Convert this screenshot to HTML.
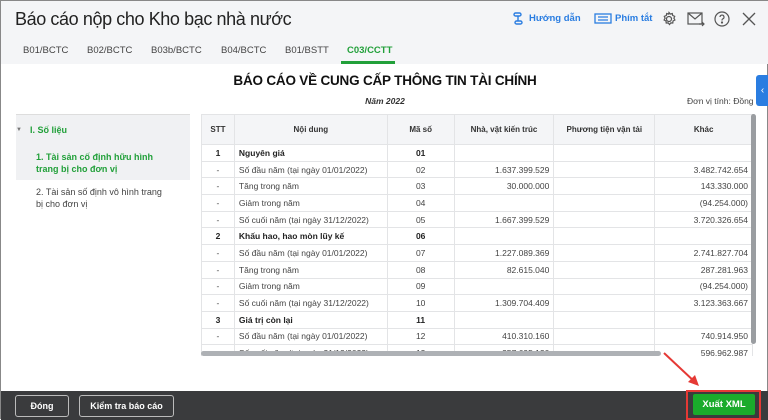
<!DOCTYPE html>
<html><head><meta charset="utf-8"><style>
*{box-sizing:border-box;margin:0;padding:0}
body{width:768px;height:419px;overflow:hidden;font-family:"Liberation Sans",sans-serif;background:#fff;position:relative;border:1px solid #888}
.hdr{position:absolute;left:0;top:0;width:768px;height:63px;background:#f4f5f7}
.title{position:absolute;left:14px;top:8px;font-size:18px;color:#222;letter-spacing:-0.4px}
.tabs{position:absolute;top:44px;font-size:9.5px;color:#444}
.tab{position:absolute;white-space:nowrap}
.act{color:#22a03a;font-weight:bold}
.uline{position:absolute;top:60px;height:3px;background:#22a03a}
.top-r{position:absolute;top:12px;font-size:9.5px;color:#2a7de1;font-weight:bold}
.h1{position:absolute;left:0;width:768px;top:72px;text-align:center;font-size:13.5px;font-weight:bold;color:#111;letter-spacing:-0.2px}
.year{position:absolute;top:95px;left:0;width:768px;text-align:center;font-size:8.5px;font-style:italic;font-weight:bold;color:#333}
.dv{position:absolute;top:95px;left:686px;font-size:8.5px;color:#444;white-space:nowrap}
.lp{position:absolute;left:15px;top:113px;width:174px;border-top:1px solid #ddd;font-size:9px}
table{position:absolute;left:0;top:0;border-collapse:collapse;font-size:8.5px;color:#444;table-layout:fixed}
td,th{border:1px solid #e3e4e6;height:16.7px;padding:0 4px;white-space:nowrap;overflow:hidden}
th{height:30px;background:#f4f5f7;font-weight:bold;color:#333;font-size:8px}
.c{text-align:center}.r{text-align:right}.b{font-weight:bold;color:#222}
.wrap{position:absolute;left:200px;top:113px;width:552px;height:242px;overflow:hidden}
.foot{position:absolute;left:0;top:390px;width:768px;height:29px;background:#3a3b3d}
.btn{position:absolute;top:4px;height:22px;border:1px solid #bbb;border-radius:3px;color:#fff;font-size:9px;font-weight:bold;text-align:center;line-height:20px}
</style></head><body>
<div class="hdr"></div>
<div class="title">Báo cáo nộp cho Kho bạc nhà nước</div>
<div class="tabs">
<span class="tab" style="left:22px">B01/BCTC</span>
<span class="tab" style="left:86px">B02/BCTC</span>
<span class="tab" style="left:150px">B03b/BCTC</span>
<span class="tab" style="left:220px">B04/BCTC</span>
<span class="tab" style="left:284px">B01/BSTT</span>
<span class="tab act" style="left:346px">C03/CCTT</span>
</div>
<div class="uline" style="left:340px;width:54px"></div>
<svg style="position:absolute;left:511px;top:11px" width="12" height="14" viewBox="0 0 12 14" fill="none" stroke="#2a7de1" stroke-width="1.4"><rect x="2" y="1" width="7" height="3" rx="1.5"/><rect x="3" y="9" width="7" height="3" rx="1.5"/><path d="M6 4v5"/></svg>
<div class="top-r" style="left:528px">Hướng dẫn</div>
<svg style="position:absolute;left:593px;top:12px" width="18" height="12" viewBox="0 0 18 12" fill="none" stroke="#2a7de1" stroke-width="1.3"><rect x="1" y="1" width="16" height="9"/><path d="M4 4h10M4 7h10"/></svg>
<div class="top-r" style="left:614px">Phím tắt</div>
<svg style="position:absolute;left:660px;top:10px" width="16" height="16" viewBox="0 0 16 16" fill="none" stroke="#555" stroke-width="1.2"><circle cx="8" cy="8" r="2.5"/><path d="M8 1.5l1.3 1.6 2-.6.4 2 2 .8-.8 1.9 1 1.8-1.9 1-.2 2-2-.1-1.3 1.6-1.3-1.6-2 .1-.2-2-1.9-1 1-1.8-.8-1.9 2-.8.4-2 2 .6z"/></svg>
<svg style="position:absolute;left:686px;top:10px" width="18" height="16" viewBox="0 0 18 16" fill="none" stroke="#555" stroke-width="1.2"><rect x="1" y="2" width="14" height="11"/><path d="M1 2l7 6 7-6M12 13h5M15 11l2 2-2 2"/></svg>
<svg style="position:absolute;left:713px;top:10px" width="16" height="16" viewBox="0 0 16 16" fill="none" stroke="#555" stroke-width="1.2"><circle cx="8" cy="8" r="7"/><path d="M6 6a2 2 0 1 1 2.5 2c-.5.2-.5.7-.5 1.5"/><circle cx="8" cy="11.5" r=".5" fill="#555"/></svg>
<svg style="position:absolute;left:741px;top:11px" width="14" height="14" viewBox="0 0 14 14" stroke="#555" stroke-width="1.3"><path d="M1 1l12 12M13 1L1 13"/></svg>

<div class="h1">BÁO CÁO VỀ CUNG CẤP THÔNG TIN TÀI CHÍNH</div>
<div class="year">Năm 2022</div>
<div class="dv">Đơn vị tính: Đồng</div>
<div style="position:absolute;left:755px;top:74px;width:13px;height:31px;background:#2a7de1;border-radius:3px 0 0 3px;color:#fff;font-size:10px;line-height:31px;text-align:center">‹</div>

<div class="lp" style="background:linear-gradient(#f0f1f3 0,#f0f1f3 65px,#fff 65px)">
<div style="position:relative;height:30px;color:#22a03a;font-weight:bold;line-height:30px;padding-left:14px"><span style="position:absolute;left:0;font-size:6px;color:#777">▼</span>I. Số liệu</div>
<div style="height:35px;padding:6px 0 0 20px;color:#22a03a;font-weight:bold;line-height:12px">1. Tài sản cố định hữu hình<br>trang bị cho đơn vị</div>
<div style="padding:6px 0 0 20px;color:#444;line-height:12px">2. Tài sản số định vô hình trang<br>bị cho đơn vị</div>
</div>

<div class="wrap">
<table>
<colgroup><col style="width:33px"><col style="width:153px"><col style="width:67px"><col style="width:100px"><col style="width:101px"><col style="width:98px"></colgroup>
<tr><th>STT</th><th>Nội dung</th><th>Mã số</th><th>Nhà, vật kiến trúc</th><th>Phương tiện vận tải</th><th>Khác</th></tr>
<tr><td class="c b">1</td><td class="b">Nguyên giá</td><td class="c b">01</td><td></td><td></td><td></td></tr>
<tr><td class="c">-</td><td>Số đầu năm (tại ngày 01/01/2022)</td><td class="c">02</td><td class="r">1.637.399.529</td><td></td><td class="r">3.482.742.654</td></tr>
<tr><td class="c">-</td><td>Tăng trong năm</td><td class="c">03</td><td class="r">30.000.000</td><td></td><td class="r">143.330.000</td></tr>
<tr><td class="c">-</td><td>Giảm trong năm</td><td class="c">04</td><td></td><td></td><td class="r">(94.254.000)</td></tr>
<tr><td class="c">-</td><td>Số cuối năm (tại ngày 31/12/2022)</td><td class="c">05</td><td class="r">1.667.399.529</td><td></td><td class="r">3.720.326.654</td></tr>
<tr><td class="c b">2</td><td class="b">Khấu hao, hao mòn lũy kế</td><td class="c b">06</td><td></td><td></td><td></td></tr>
<tr><td class="c">-</td><td>Số đầu năm (tại ngày 01/01/2022)</td><td class="c">07</td><td class="r">1.227.089.369</td><td></td><td class="r">2.741.827.704</td></tr>
<tr><td class="c">-</td><td>Tăng trong năm</td><td class="c">08</td><td class="r">82.615.040</td><td></td><td class="r">287.281.963</td></tr>
<tr><td class="c">-</td><td>Giảm trong năm</td><td class="c">09</td><td></td><td></td><td class="r">(94.254.000)</td></tr>
<tr><td class="c">-</td><td>Số cuối năm (tại ngày 31/12/2022)</td><td class="c">10</td><td class="r">1.309.704.409</td><td></td><td class="r">3.123.363.667</td></tr>
<tr><td class="c b">3</td><td class="b">Giá trị còn lại</td><td class="c b">11</td><td></td><td></td><td></td></tr>
<tr><td class="c">-</td><td>Số đầu năm (tại ngày 01/01/2022)</td><td class="c">12</td><td class="r">410.310.160</td><td></td><td class="r">740.914.950</td></tr>
<tr><td class="c">-</td><td>Số cuối năm (tại ngày 31/12/2022)</td><td class="c">13</td><td class="r">357.695.120</td><td></td><td class="r">596.962.987</td></tr>
</table>
</div>
<div style="position:absolute;left:200px;top:350px;width:460px;height:5px;background:#aeb1b5;border-radius:3px"></div>
<div style="position:absolute;left:750px;top:113px;width:5px;height:230px;background:#9a9da1;border-radius:3px"></div>

<svg style="position:absolute;left:655px;top:345px" width="50" height="45"><path d="M8 7L40 37" stroke="#e53935" stroke-width="2"/><path d="M43 40L32 36L39 29Z" fill="#e53935"/></svg>

<div class="foot">
<div class="btn" style="left:14px;width:54px">Đóng</div>
<div class="btn" style="left:78px;width:95px">Kiểm tra báo cáo</div>
<div style="position:absolute;left:685px;top:-1px;width:75px;height:30px;border:2px solid #e53935"></div>
<div style="position:absolute;left:692px;top:3px;width:62px;height:21px;background:#1aab2b;border-radius:2px;color:#fff;font-size:9.5px;font-weight:bold;text-align:center;line-height:21px">Xuất XML</div>
</div>
</body></html>
